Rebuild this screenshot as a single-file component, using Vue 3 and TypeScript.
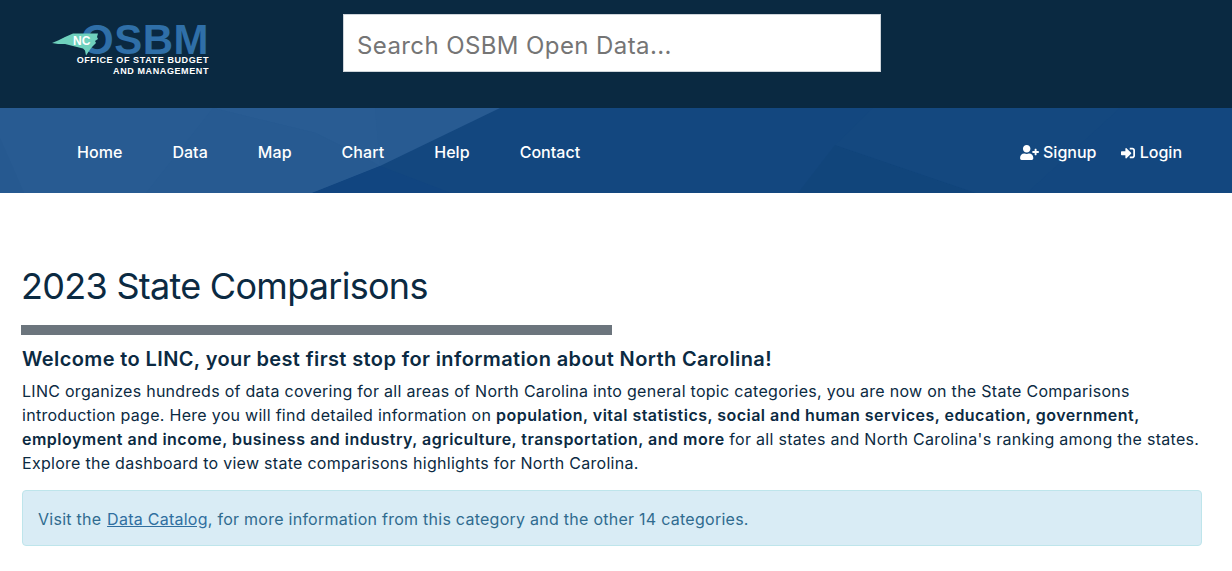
<script setup lang="ts">
const links = ['Home', 'Data', 'Map', 'Chart', 'Help', 'Contact']
</script>

<template>
  <div class="page">
    <header class="top">
      <a class="logo">
        <div class="logo-mark">
          <span class="osbm">OSBM</span>
          <svg class="state" viewBox="0 0 48 24" width="48" height="24">
            <path d="M0 11 L6 8.500 L13 5 L21 1.500 L46 1.500 L45 5 L46 7 L43 9 L44 11 L40 15 L37 19 L34 23.500 L33 18.500 L31 16.500 L25 15 L13 12 L6 12 Z" fill="#6fd1bd" />
          </svg>
          <span class="nc">NC</span>
        </div>
        <div class="logo-sub">OFFICE OF STATE BUDGET</div>
        <div class="logo-sub">AND MANAGEMENT</div>
      </a>
      <input class="search" type="text" placeholder="Search OSBM Open Data..." />
    </header>

    <nav class="nav">
      <svg class="nav-bg" viewBox="0 0 1232 85" preserveAspectRatio="none">
        <polygon points="0,0 500,0 380,58 312,85 0,85" fill="#285b92" />
        <polygon points="213,0 375,0 380,58 316,25" fill="#295c93" />
        <polygon points="213,0 316,25 380,58 312,85 146,85" fill="#275a91" />
        <polygon points="0,0 0,30 24,85 0,85" fill="#265990" />
        <polygon points="380,58 451,85 312,85" fill="#114580" />
        <polygon points="835,37 976,85 798,85" fill="#11457b" />
        <polygon points="873,0 1120,0 1027,85 976,85 835,37" fill="#14487f" />
      </svg>
      <ul class="nav-links">
        <li v-for="link in links" :key="link"><a>{{ link }}</a></li>
      </ul>
      <ul class="nav-links right">
        <li>
          <a>
            <svg class="ico" viewBox="0 0 640 512" width="19" height="15"><path fill="#fff" d="M624 208h-64v-64c0-8.800-7.200-16-16-16h-32c-8.800 0-16 7.200-16 16v64h-64c-8.800 0-16 7.200-16 16v32c0 8.800 7.200 16 16 16h64v64c0 8.800 7.200 16 16 16h32c8.800 0 16-7.200 16-16v-64h64c8.800 0 16-7.200 16-16v-32c0-8.800-7.200-16-16-16zm-400 48c70.700 0 128-57.300 128-128S294.700 0 224 0 96 57.300 96 128s57.300 128 128 128zm89.600 32h-16.700c-22.200 10.200-46.900 16-72.900 16s-50.600-5.800-72.900-16h-16.700C60.200 288 0 348.200 0 422.400V464c0 26.500 21.500 48 48 48h352c26.500 0 48-21.500 48-48v-41.600c0-74.200-60.200-134.400-134.400-134.400z"/></svg>
            Signup
          </a>
        </li>
        <li>
          <a>
            <svg class="ico" viewBox="0 0 512 512" width="14" height="14"><path fill="#fff" d="M416 448h-84c-6.600 0-12-5.400-12-12v-40c0-6.600 5.400-12 12-12h84c17.700 0 32-14.300 32-32V160c0-17.700-14.300-32-32-32h-84c-6.600 0-12-5.400-12-12V76c0-6.600 5.400-12 12-12h84c53 0 96 43 96 96v192c0 53-43 96-96 96zm-47-201L201 79c-15-15-41-4.500-41 17v96H24c-13.300 0-24 10.700-24 24v96c0 13.300 10.700 24 24 24h136v96c0 21.500 26 32 41 17l168-168c9.300-9.400 9.300-24.600 0-34z"/></svg>
            Login
          </a>
        </li>
      </ul>
    </nav>

    <main class="content">
      <h1>2023 State Comparisons</h1>
      <div class="rule"></div>
      <h2>Welcome to LINC, your best first stop for information about North Carolina!</h2>
      <p>
        LINC organizes hundreds of data covering for all areas of North Carolina into general topic categories, you are now on the State Comparisons introduction page. Here you will find detailed information on
        <b>population, vital statistics, social and human services, education, government, employment and income, business and industry, agriculture, transportation, and more</b>
        for all states and North Carolina's ranking among the states. Explore the dashboard to view state comparisons highlights for North Carolina.
      </p>
      <div class="alert">Visit the <a>Data Catalog</a>, for more information from this category and the other 14 categories.</div>
    </main>
  </div>
</template>

<style>
body {
  background: #fff;
}
</style>

<style scoped>
.page {
  font-family: Inter, "Noto Sans", sans-serif;
  color: #0b2a42;
  font-size: 16px;
}

.top {
  height: 108px;
  background: #0a2941;
  display: flex;
  padding: 14px 0 0 52px;
  box-sizing: border-box;
}

.logo {
  width: 291px;
  flex: none;
  color: #fff;
}

.logo-mark {
  position: relative;
  width: 157px;
  height: 30px;
  margin-top: 11px;
}

.osbm {
  position: absolute;
  right: 0;
  top: 0;
  font: bold 42px/30px "Liberation Sans", sans-serif;
  letter-spacing: 0.5px;
  color: #2f6fa8;
}

.state {
  position: absolute;
  left: 0;
  top: 7px;
}

.nc {
  position: absolute;
  left: 21px;
  top: 10px;
  font: bold 12px/12px "Liberation Sans", sans-serif;
  color: #fff;
}

.logo-sub {
  width: 157px;
  text-align: right;
  font: bold 9px/11px "Liberation Sans", sans-serif;
  letter-spacing: 0.6px;
  color: #fff;
}

.logo-sub:first-of-type {
  padding-top: 2px;
}

.search {
  width: 538px;
  height: 58px;
  box-sizing: border-box;
  border: 1px solid #ced4da;
  padding: 4px 13px 0;
  font: 24px Inter, sans-serif;
  letter-spacing: 0.4px;
  background: #fff;
  outline: none;
}

.search::placeholder {
  color: #757575;
  opacity: 1;
}

.nav {
  position: relative;
  height: 85px;
  box-sizing: border-box;
  background: #13477f;
  display: flex;
  justify-content: space-between;
  align-items: center;
  padding: 2px 50px 0 77px;
  overflow: hidden;
}

.nav-bg {
  position: absolute;
  left: 0;
  top: 0;
  width: 100%;
  height: 100%;
}

.nav-links {
  position: relative;
  list-style: none;
  display: flex;
  gap: 50px;
  margin: 0;
  padding: 0;
  color: #fff;
  font-weight: 500;
  font-size: 16px;
  letter-spacing: 0.05px;
}

.nav-links.right {
  gap: 25px;
  letter-spacing: 0;
}

.ico {
  vertical-align: -2px;
}

.content {
  padding: 72px 30px 0 22px;
}

h1 {
  margin: 0 0 0 -1px;
  font-size: 36px;
  font-weight: 400;
  line-height: 43px;
  letter-spacing: -0.72px;
}

.rule {
  width: 591px;
  height: 10px;
  background: #6c757d;
  margin: 17px 0 0 -1px;
}

h2 {
  margin: 12px 0 8px;
  font-size: 20px;
  font-weight: 600;
  line-height: 24px;
  letter-spacing: 0.39px;
}

p {
  margin: 0 0 15px;
  line-height: 24px;
  letter-spacing: 0.28px;
}

p b {
  letter-spacing: 0.48px;
  font-weight: 600;
}

.alert {
  height: 56px;
  box-sizing: border-box;
  background: #d9ecf5;
  border: 1px solid #bee5eb;
  border-radius: 4px;
  padding: 15px;
  line-height: 26px;
  color: #2f6b8f;
  letter-spacing: 0.26px;
}

.alert a {
  color: #2f6fa0;
  text-decoration: underline;
  margin-left: 1px;
}
</style>
